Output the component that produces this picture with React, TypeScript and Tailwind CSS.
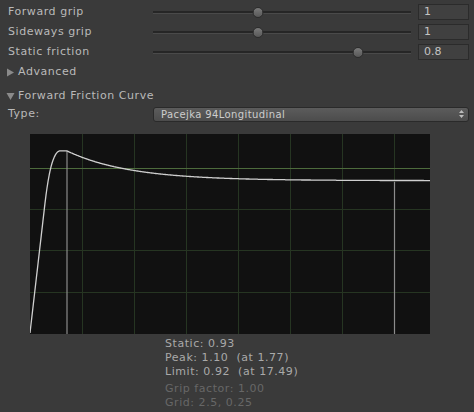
import React from 'react';

const font = { fontFamily: '"DejaVu Sans", "Liberation Sans", sans-serif' };

// graph geometry: 400x200 px, x grid every 2.5 slip units (52px), y grid every 0.25 (41.4px)
const W = 400;
const H = 200;
const PX_PER_UNIT_X = 52 / 2.5;
const PX_PER_UNIT_Y = 165.6;
const BASE = 199;
const PEAK_SLIP = 1.77;
const PEAK = 1.1;

// linear rise that rounds off into the peak, then a slow decay to the limit
function friction(u: number) {
  if (u <= PEAK_SLIP) {
    const t = u / PEAK_SLIP;
    const k = 1.75;
    const t0 = 0.4;
    if (t <= t0) return PEAK * k * t;
    const len = 1 - t0;
    const s = (t - t0) / len;
    const h00 = 2 * s ** 3 - 3 * s ** 2 + 1;
    const h10 = s ** 3 - 2 * s ** 2 + s;
    const h01 = -2 * s ** 3 + 3 * s ** 2;
    return PEAK * Math.min(1, h00 * k * t0 + h10 * len * k + h01);
  }
  return 0.92 + 0.18 * Math.exp(-(u - PEAK_SLIP) / 3);
}

function curvePath() {
  const pts: string[] = [];
  for (let px = 0; px <= W; px += 0.5) {
    const v = friction(px / PX_PER_UNIT_X);
    const y = BASE - v * PX_PER_UNIT_Y;
    pts.push(`${px === 0 ? 'M' : 'L'}${px.toFixed(1)},${y.toFixed(1)}`);
  }
  return pts.join(' ');
}

function SliderRow({ label, value, pos }: { label: string; value: string; pos: number }) {
  return (
    <div className="flex h-[20px] items-center pl-[8px] pr-[5px]">
      <div className="w-[145px] shrink-0 text-[11px] text-[#b9b9b9]">{label}</div>
      <div className="relative mr-[7px] flex h-[12px] flex-1 items-center">
        <div className="h-[3px] w-full border-t-2 border-b border-t-[#262626] border-b-[#4a4a4a]" />
        <div
          className="absolute top-[1px] h-[11px] w-[11px] -translate-x-1/2 rounded-full border border-[#2c2c2c] bg-gradient-to-b from-[#7a7a7a] to-[#585858]"
          style={{ left: `${pos * 100}%` }}
        />
      </div>
      <div className="flex h-[16px] w-[51px] items-center border border-[#2b2b2b] bg-[#404040] pl-[5px] text-[11px] tracking-normal text-[#c4c4c4]">
        {value}
      </div>
    </div>
  );
}

function Graph() {
  const vLines = [52, 104, 156, 208, 260, 312, 364];
  const hLines = [75, 116, 158];
  return (
    <svg width={W} height={H} className="block bg-[#111111]">
      {vLines.map((x) => (
        <line key={x} x1={x + 0.5} y1={0} x2={x + 0.5} y2={H} stroke="#263522" strokeWidth={1} />
      ))}
      {hLines.map((y) => (
        <line key={y} x1={0} y1={y + 0.5} x2={W} y2={y + 0.5} stroke="#263522" strokeWidth={1} />
      ))}
      {/* value 1.0 reference */}
      <line x1={0} y1={34.5} x2={W} y2={34.5} stroke="#4d6b3c" strokeWidth={1} />
      {/* peak and limit markers */}
      <line x1={37} y1={17} x2={37} y2={H} stroke="#8c8c8c" strokeWidth={1.2} />
      <line x1={364.5} y1={48} x2={364.5} y2={H} stroke="#8c8c8c" strokeWidth={1.2} />
      <path d={curvePath()} fill="none" stroke="#cfcfcf" strokeWidth={1.3} />
    </svg>
  );
}

export default function App() {
  return (
    <div className="h-[412px] w-[474px] overflow-hidden bg-[#3a3a3a] pt-[2px] tracking-[0.55px]" style={font}>
      <SliderRow label="Forward grip" value="1" pos={0.407} />
      <SliderRow label="Sideways grip" value="1" pos={0.407} />
      <SliderRow label="Static friction" value="0.8" pos={0.795} />

      <div className="flex h-[21px] items-center pl-[6px] text-[11px] text-[#b9b9b9]">
        <svg width="9" height="9" viewBox="0 0 9 9" className="mr-[3px]">
          <path d="M1,0.5 L8,4.5 L1,8.5 Z" fill="#8a8a8a" />
        </svg>
        Advanced
      </div>

      <div className="mt-[3px] flex h-[20px] items-center pl-[6px] text-[11px] text-[#b9b9b9]">
        <svg width="9" height="9" viewBox="0 0 9 9" className="mr-[3px]">
          <path d="M0.5,1 L8.5,1 L4.5,8 Z" fill="#8a8a8a" />
        </svg>
        Forward Friction Curve
      </div>

      <div className="flex h-[16px] items-center pl-[8px] pr-[5px]">
        <div className="w-[145px] shrink-0 text-[11px] text-[#b9b9b9]">Type:</div>
        <div className="flex h-[15px] flex-1 items-center justify-between rounded-[3px] border border-[#2a2a2a] bg-gradient-to-b from-[#5c5c5c] to-[#4c4c4c] pl-[7px] pr-[4px] text-[10px] tracking-[0.4px] text-[#cdcdcd]">
          <span>Pacejka 94Longitudinal</span>
          <svg width="5" height="8" viewBox="0 0 5 8">
            <path d="M0,3 L2.5,0 L5,3 Z M0,5 L2.5,8 L5,5 Z" fill="#bdbdbd" />
          </svg>
        </div>
      </div>

      <div className="ml-[30px] mt-[12px]">
        <Graph />
      </div>

      <div className="ml-[165px] mt-[3px] text-[11px] leading-[14px] text-[#a9a9a9]">
        <div>Static: 0.93</div>
        <div className="whitespace-pre">Peak: 1.10  (at 1.77)</div>
        <div className="whitespace-pre">Limit: 0.92  (at 17.49)</div>
      </div>
      <div className="ml-[165px] mt-[3px] text-[11px] leading-[14px] text-[#676767]">
        <div>Grip factor: 1.00</div>
        <div>Grid: 2.5, 0.25</div>
      </div>
    </div>
  );
}
